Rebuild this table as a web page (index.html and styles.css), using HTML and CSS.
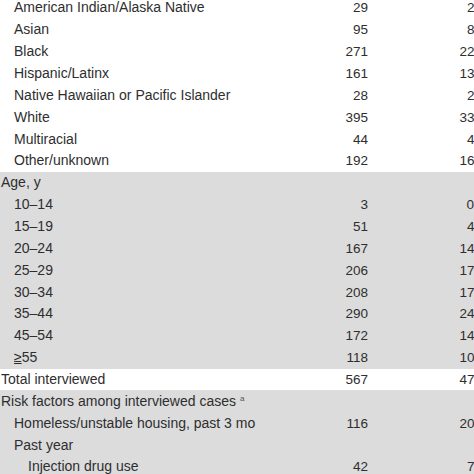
FILE: index.html
```html
<!DOCTYPE html>
<html>
<head>
<meta charset="utf-8">
<link rel="stylesheet" href="styles.css">
</head>
<body>
<div class="frame">
<table class="data">
<colgroup><col class="c-label"><col class="c-n1"><col class="c-n2"></colgroup>
<tbody>
<tr><td class="l1">American Indian/Alaska Native</td><td class="n">29</td><td class="n">25</td></tr>
<tr><td class="l1">Asian</td><td class="n">95</td><td class="n">82</td></tr>
<tr><td class="l1">Black</td><td class="n">271</td><td class="n">226</td></tr>
<tr><td class="l1">Hispanic/Latinx</td><td class="n">161</td><td class="n">134</td></tr>
<tr><td class="l1">Native Hawaiian or Pacific Islander</td><td class="n">28</td><td class="n">24</td></tr>
<tr><td class="l1">White</td><td class="n">395</td><td class="n">330</td></tr>
<tr><td class="l1">Multiracial</td><td class="n">44</td><td class="n">40</td></tr>
<tr><td class="l1">Other/unknown</td><td class="n">192</td><td class="n">160</td></tr>
</tbody>
<tbody class="shade">
<tr><td class="l0">Age, y</td><td class="n"></td><td class="n"></td></tr>
<tr><td class="l1">10–14</td><td class="n">3</td><td class="n nil">0</td></tr>
<tr><td class="l1">15–19</td><td class="n">51</td><td class="n">43</td></tr>
<tr><td class="l1">20–24</td><td class="n">167</td><td class="n">140</td></tr>
<tr><td class="l1">25–29</td><td class="n">206</td><td class="n">172</td></tr>
<tr><td class="l1">30–34</td><td class="n">208</td><td class="n">174</td></tr>
<tr><td class="l1">35–44</td><td class="n">290</td><td class="n">242</td></tr>
<tr><td class="l1">45–54</td><td class="n">172</td><td class="n">143</td></tr>
<tr><td class="l1"><span class="ge">≥</span>55</td><td class="n">118</td><td class="n">100</td></tr>
</tbody>
<tbody>
<tr><td class="l0">Total interviewed</td><td class="n">567</td><td class="n">473</td></tr>
</tbody>
<tbody class="shade">
<tr><td class="l0">Risk factors among interviewed cases <sup class="fn">a</sup></td><td class="n"></td><td class="n"></td></tr>
<tr><td class="l1">Homeless/unstable housing, past 3 mo</td><td class="n">116</td><td class="n">200</td></tr>
<tr><td class="l1">Past year</td><td class="n"></td><td class="n"></td></tr>
<tr><td class="l2">Injection drug use</td><td class="n">42</td><td class="n">74</td></tr>
</tbody>
</table>
</div>
</body>
</html>
```
FILE: styles.css
```css
html, body {
  margin: 0;
  padding: 0;
  background: #ffffff;
}
.frame {
  width: 474px;
  height: 474px;
  overflow: hidden;
}
.data {
  margin-top: -3px;
  border-collapse: collapse;
  table-layout: fixed;
  width: 482px;
  font-family: "Liberation Sans", Arial, sans-serif;
  font-size: 14px;
  color: #2e2e2e;
}
.c-label { width: 250px; }
.c-n1 { width: 118px; }
.c-n2 { width: 114px; }
.data td {
  height: 21.86px;
  padding: 0;
  line-height: 15px;
  white-space: nowrap;
  vertical-align: middle;
}
.shade td {
  background: #dcdcdd;
}
.l0 { padding-left: 1px !important; }
.l1 { padding-left: 14px !important; }
.l2 { padding-left: 28px !important; }
.n { text-align: right; font-size: 13.5px; }
.nil { padding-right: 8px !important; }
.ge { text-decoration: underline; text-underline-offset: 1px; }
.fn {
  font-size: 8px;
  vertical-align: 5px;
  line-height: 0;
  color: #555;
}
```
